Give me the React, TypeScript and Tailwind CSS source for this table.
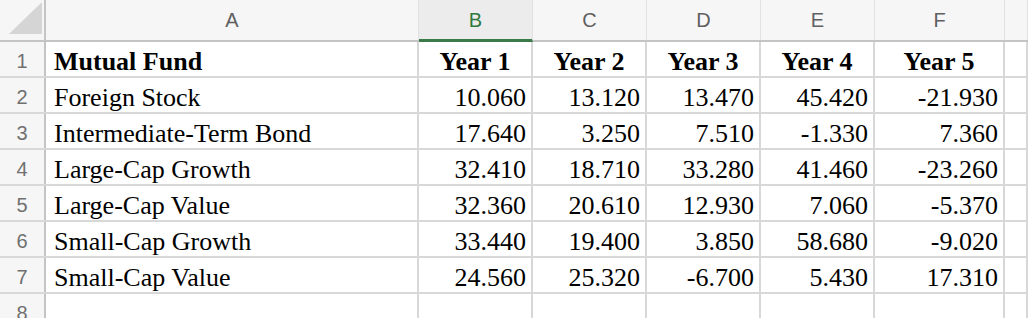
import React from 'react';

const cols = ['A', 'B', 'C', 'D', 'E', 'F', ''];
const widths = ['w-[373px]', 'w-[114px]', 'w-[114px]', 'w-[114px]', 'w-[114px]', 'w-[130px]', 'flex-1'];

const rows: string[][] = [
  ['Mutual Fund', 'Year 1', 'Year 2', 'Year 3', 'Year 4', 'Year 5'],
  ['Foreign Stock', '10.060', '13.120', '13.470', '45.420', '-21.930'],
  ['Intermediate-Term Bond', '17.640', '3.250', '7.510', '-1.330', '7.360'],
  ['Large-Cap Growth', '32.410', '18.710', '33.280', '41.460', '-23.260'],
  ['Large-Cap Value', '32.360', '20.610', '12.930', '7.060', '-5.370'],
  ['Small-Cap Growth', '33.440', '19.400', '3.850', '58.680', '-9.020'],
  ['Small-Cap Value', '24.560', '25.320', '-6.700', '5.430', '17.310'],
  ['', '', '', '', '', ''],
];

const App = () => {
  return (
    <div className="w-[1028px] h-[318px] overflow-hidden bg-white font-['Liberation_Serif',serif]">
      {/* column header */}
      <div className="flex h-[42px] bg-[#f6f6f6] border-b-2 border-[#c4c4c4]">
        <div className="w-[46px] shrink-0 border-r-2 border-[#c4c4c4] relative">
          <svg width="44" height="40" className="absolute left-0 top-0">
            <polygon points="9,34 42,34 42,2" fill="#d5d5d5" />
          </svg>
        </div>
        {cols.map((c, i) => (
          <div
            key={i}
            className={`${widths[i]} shrink-0 border-r border-[#e2e2e2] flex items-center justify-center text-[20px] font-['Liberation_Sans',sans-serif] ${
              c === 'B' ? 'text-[#2f7a3e] bg-[#ececec] border-b-[3px] border-b-[#3a7a4a] -mb-[2px]' : 'text-[#606060]'
            }`}
          >
            {c}
          </div>
        ))}
      </div>
      {rows.map((r, ri) => (
        <div key={ri} className="flex h-[36px] border-b-2 border-[#d8d8d8]">
          <div className="w-[46px] shrink-0 border-r-2 border-[#c4c4c4] bg-[#f6f6f6] flex items-end justify-center pb-[5px] text-[20px] leading-none text-[#707070] font-['Liberation_Sans',sans-serif]">
            {ri + 1}
          </div>
          {[...r, ''].map((v, ci) => (
            <div
              key={ci}
              className={`${widths[ci]} shrink-0 border-r-2 border-[#d8d8d8] flex items-end pb-[1px] text-[26px] leading-none text-black whitespace-nowrap ${
                ri === 0 ? 'font-bold' : ''
              } ${ci === 0 ? 'justify-start pl-[8px]' : ri === 0 ? 'justify-center' : 'justify-end pr-[5px]'}`}
            >
              {v}
            </div>
          ))}
        </div>
      ))}
    </div>
  );
};

export default App;
